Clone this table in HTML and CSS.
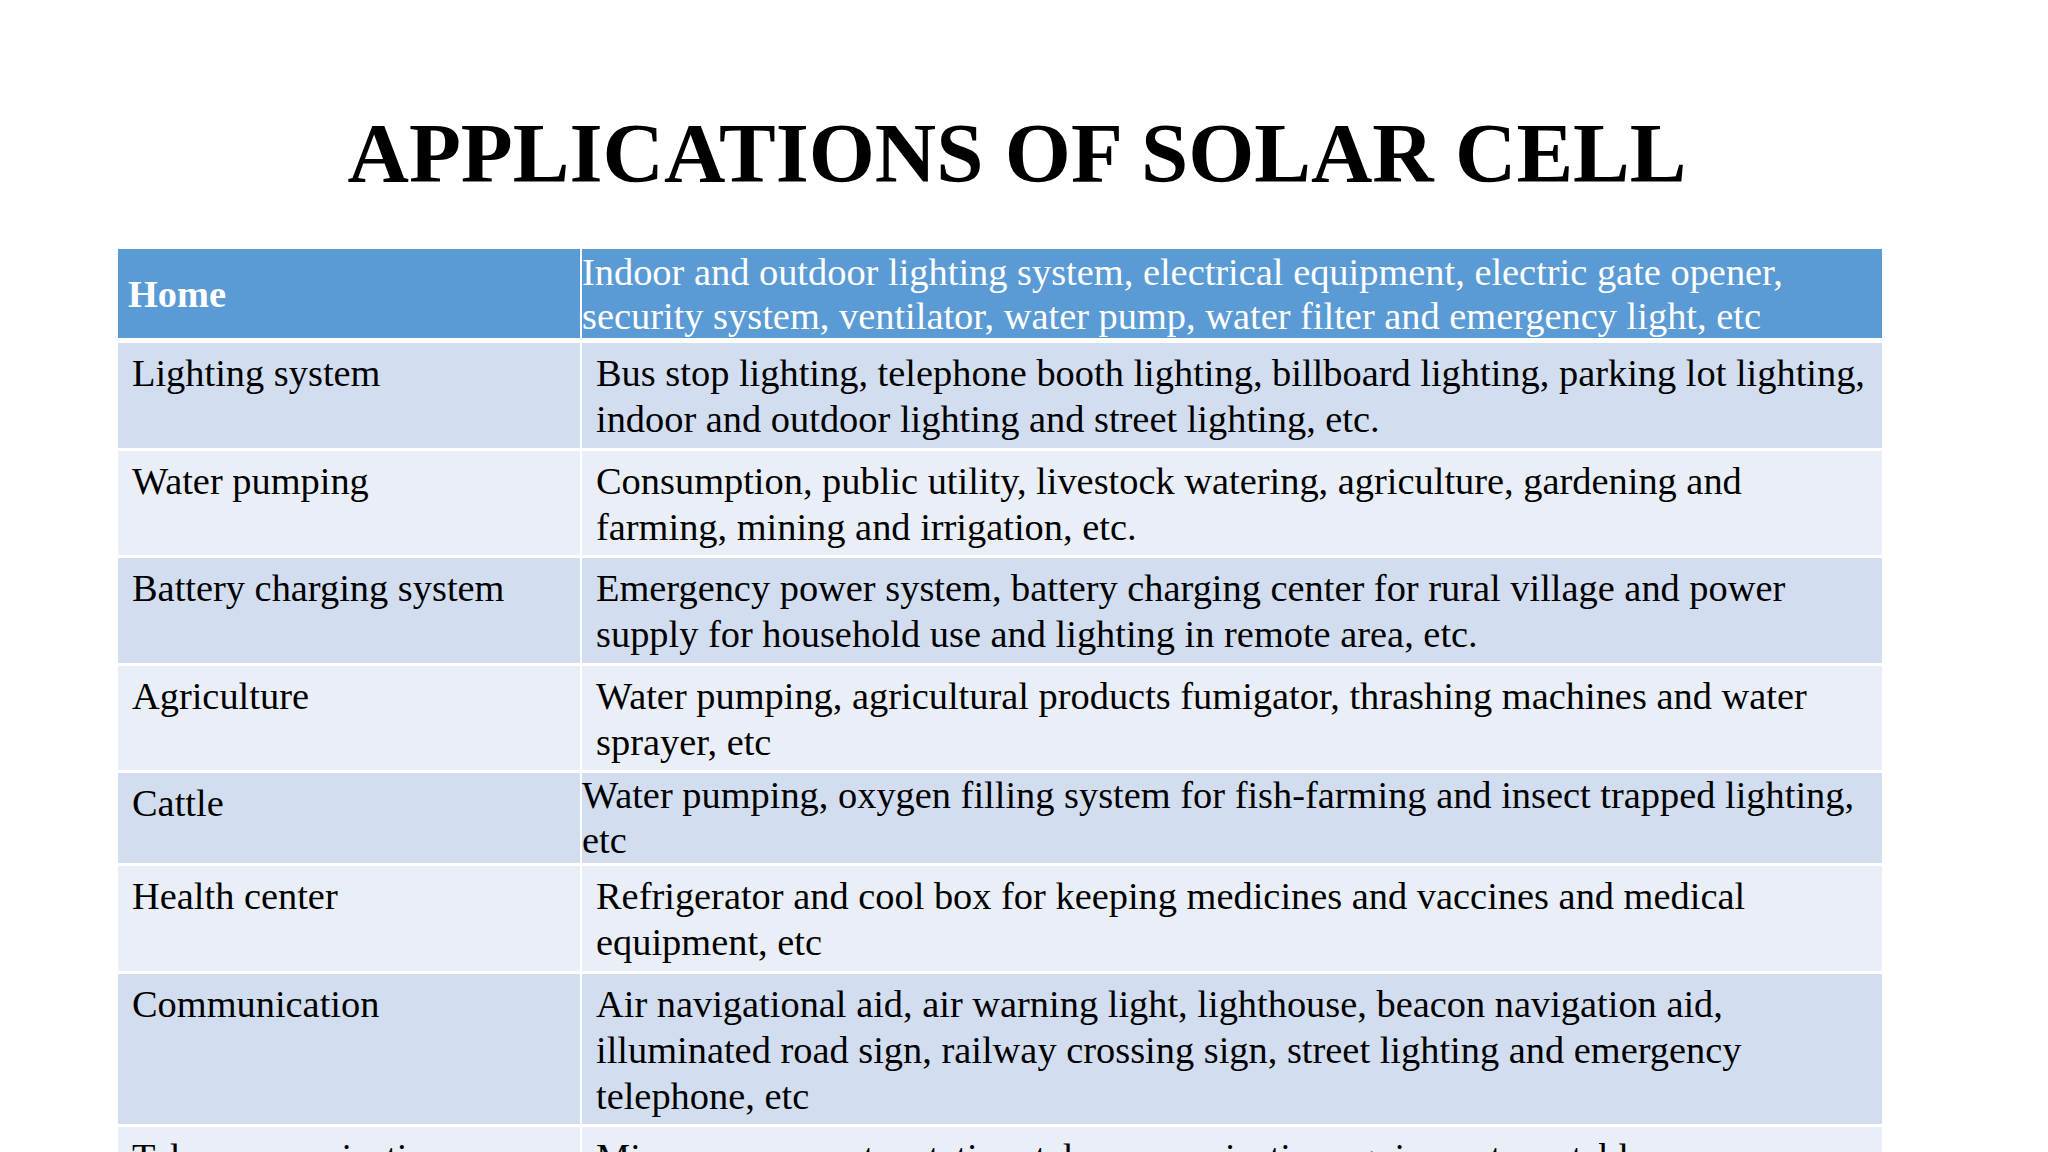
FILE: index.html
```html
<!DOCTYPE html>
<html lang="en">
<head>
<meta charset="utf-8">
<title>Applications of Solar Cell</title>
<link rel="stylesheet" href="styles.css">
</head>
<body>
<main class="slide">
  <h1 class="title">APPLICATIONS OF SOLAR CELL</h1>
  <table class="apps">
    <colgroup><col class="c1"><col class="c2"></colgroup>
    <thead>
      <tr class="head">
        <th class="name">Home</th>
        <td class="desc tight">Indoor and outdoor lighting system, electrical equipment, electric gate opener,<br>security system, ventilator, water pump, water filter and emergency light, etc</td>
      </tr>
    </thead>
    <tbody>
      <tr class="band1">
        <td class="name">Lighting system</td>
        <td class="desc">Bus stop lighting, telephone booth lighting, billboard lighting, parking lot lighting,<br>indoor and outdoor lighting and street lighting, etc.</td>
      </tr>
      <tr class="band2">
        <td class="name">Water pumping</td>
        <td class="desc">Consumption, public utility, livestock watering, agriculture, gardening and<br>farming, mining and irrigation, etc.</td>
      </tr>
      <tr class="band1">
        <td class="name">Battery charging system</td>
        <td class="desc">Emergency power system, battery charging center for rural village and power<br>supply for household use and lighting in remote area, etc.</td>
      </tr>
      <tr class="band2">
        <td class="name">Agriculture</td>
        <td class="desc">Water pumping, agricultural products fumigator, thrashing machines and water<br>sprayer, etc</td>
      </tr>
      <tr class="band1">
        <td class="name">Cattle</td>
        <td class="desc tight">Water pumping, oxygen filling system for fish-farming and insect trapped lighting,<br>etc</td>
      </tr>
      <tr class="band2">
        <td class="name">Health center</td>
        <td class="desc">Refrigerator and cool box for keeping medicines and vaccines and medical<br>equipment, etc</td>
      </tr>
      <tr class="band1">
        <td class="name">Communication</td>
        <td class="desc">Air navigational aid, air warning light, lighthouse, beacon navigation aid,<br>illuminated road sign, railway crossing sign, street lighting and emergency<br>telephone, etc</td>
      </tr>
      <tr class="band2">
        <td class="name">Tele communication</td>
        <td class="desc">Microwave repeater station, telecommunication equipment, portable<br>radio and television, etc</td>
      </tr>
    </tbody>
  </table>
</main>
</body>
</html>
```
FILE: styles.css
```css
html, body {
  margin: 0;
  padding: 0;
  background: #ffffff;
  overflow: hidden;
  width: 2048px;
  height: 1152px;
}

.slide {
  font-family: "Liberation Serif", "Times New Roman", serif;
  color: #000;
  padding-top: 111px;
}

.title {
  margin: 0;
  font-size: 85px;
  line-height: 85px;
  font-weight: bold;
  text-align: center;
  padding-right: 14px;
}

.apps {
  margin: 53px 0 0 118px;
  width: 1764px;
  table-layout: fixed;
  border-collapse: separate;
  border-spacing: 0;
  font-size: 38.4px;
  line-height: 46px;
}

.c1 { width: 464px; }
.c2 { width: 1300px; }

.apps td,
.apps th {
  vertical-align: top;
  text-align: left;
  border-bottom: 3px solid #ffffff;
  padding: 7px 8px 5.5px 14px;
  white-space: nowrap;
}

.apps .name {
  border-right: 2px solid #ffffff;
}

.apps .desc {
  padding-left: 14px;
}

.apps .desc.tight {
  padding: 0;
  line-height: 45px;
}

.head th,
.head td {
  background: #5b9bd5;
  color: #ffffff;
  border-bottom-width: 5px;
}

.head .desc.tight {
  padding-top: 1px;
  line-height: 44px;
}

.head th {
  font-weight: bold;
  vertical-align: middle;
  padding-left: 10px;
}

.band1 td { background: #d2deef; }
.band2 td { background: #eaeff7; }
```
